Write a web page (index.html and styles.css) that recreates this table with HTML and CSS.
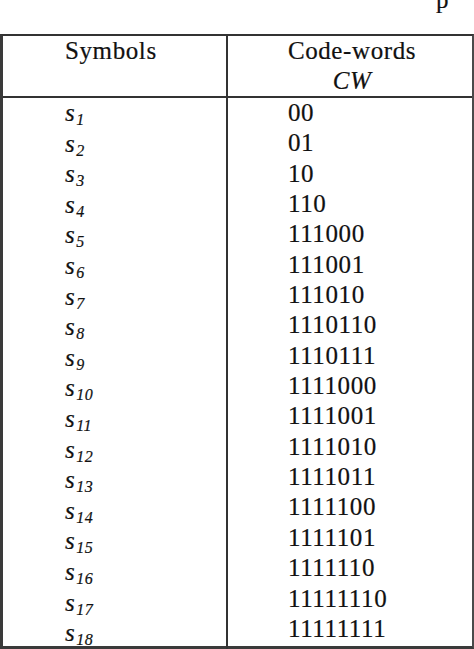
FILE: index.html
```html
<!DOCTYPE html>
<html>
<head>
<meta charset="utf-8">
<link rel="stylesheet" href="styles.css">
</head>
<body>
<div class="caption"><span class="caption-text">p</span></div>
<div class="table">
  <div class="head">
    <div class="hcell left"><div class="hline">Symbols</div></div>
    <div class="hcell right"><div class="hline">Code-words</div><div class="hline"><i>CW</i></div></div>
  </div>
  <div class="body">
    <div class="col left">
      <div class="srow"><i>s</i><i class="sub">1</i></div>
      <div class="srow"><i>s</i><i class="sub">2</i></div>
      <div class="srow"><i>s</i><i class="sub">3</i></div>
      <div class="srow"><i>s</i><i class="sub">4</i></div>
      <div class="srow"><i>s</i><i class="sub">5</i></div>
      <div class="srow"><i>s</i><i class="sub">6</i></div>
      <div class="srow"><i>s</i><i class="sub">7</i></div>
      <div class="srow"><i>s</i><i class="sub">8</i></div>
      <div class="srow"><i>s</i><i class="sub">9</i></div>
      <div class="srow"><i>s</i><i class="sub">10</i></div>
      <div class="srow"><i>s</i><i class="sub">11</i></div>
      <div class="srow"><i>s</i><i class="sub">12</i></div>
      <div class="srow"><i>s</i><i class="sub">13</i></div>
      <div class="srow"><i>s</i><i class="sub">14</i></div>
      <div class="srow"><i>s</i><i class="sub">15</i></div>
      <div class="srow"><i>s</i><i class="sub">16</i></div>
      <div class="srow"><i>s</i><i class="sub">17</i></div>
      <div class="srow"><i>s</i><i class="sub">18</i></div>
    </div>
    <div class="col right">
      <div class="crow">00</div>
      <div class="crow">01</div>
      <div class="crow">10</div>
      <div class="crow">110</div>
      <div class="crow">111000</div>
      <div class="crow">111001</div>
      <div class="crow">111010</div>
      <div class="crow">1110110</div>
      <div class="crow">1110111</div>
      <div class="crow">1111000</div>
      <div class="crow">1111001</div>
      <div class="crow">1111010</div>
      <div class="crow">1111011</div>
      <div class="crow">1111100</div>
      <div class="crow">1111101</div>
      <div class="crow">1111110</div>
      <div class="crow">11111110</div>
      <div class="crow">11111111</div>
    </div>
  </div>
</div>
</body>
</html>
```

FILE: styles.css
```css
html, body {
  margin: 0;
  padding: 0;
  background: #ffffff;
}
body {
  font-family: "Liberation Serif", "Times New Roman", serif;
  font-size: 25px;
  letter-spacing: 0.6px;
  color: #111111;
  -webkit-text-stroke: 0.2px #111111;
  width: 474px;
  height: 649px;
  overflow: hidden;
}
.caption {
  height: 34px;
  overflow: hidden;
}
.caption-text {
  display: block;
  line-height: 25px;
  margin-top: -12.6px;
  padding-left: 436px;
}
.table {
  box-sizing: border-box;
  width: 474px;
  height: 615px;
  border-top: 2px solid #333333;
  border-left: 3px solid #3a3a3a;
  border-right: 2px solid #4a4a4a;
  border-bottom: 3px solid #3a3a3a;
}
.head {
  display: grid;
  grid-template-columns: 223px 1fr;
  height: 60px;
  border-bottom: 2px solid #333333;
}
.hline {
  line-height: 30px;
  height: 30px;
}
.hcell.left {
  padding-left: 62px;
}
.hcell.right {
  border-left: 2px solid #333333;
  padding-left: 4px;
  text-align: center;
}
.body {
  display: grid;
  grid-template-columns: 223px 1fr;
  height: 548px;
}
.col.left {
  padding-left: 62px;
}
.col.right {
  border-left: 2px solid #333333;
  padding-left: 60px;
}
.srow {
  height: 30.6px;
  line-height: 30.6px;
}
.crow {
  height: 30.35px;
  line-height: 30.35px;
}
.sub {
  font-size: 16px;
  line-height: 0;
  vertical-align: -4px;
  letter-spacing: 0.3px;
  margin-left: 1px;
}
```
